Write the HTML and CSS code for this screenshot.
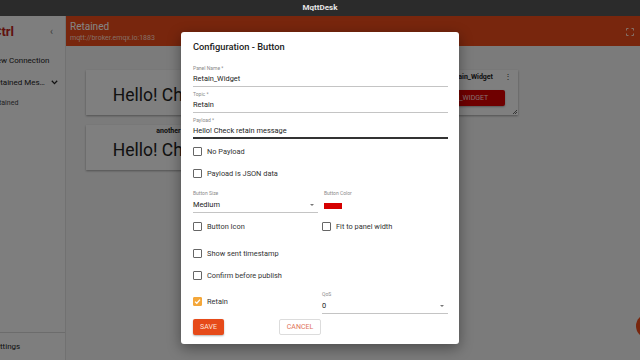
FILE: index.html
```html
<!DOCTYPE html>
<html lang="en">
<head>
  <meta charset="UTF-8">
  <title>MqttDesk</title>
  <meta name="viewport" content="width=device-width, initial-scale=1.0">
  <link rel="stylesheet" href="styles.css">
</head>

<body>
  <div class="titlebar">MqttDesk</div>

  <div class="app">
    <!-- Sidebar -->
    <aside class="sidebar">
      <div class="side-top">
        <div class="logo"><span>MqttCtrl</span></div>
        <span class="collapse">&lsaquo;</span>
      </div>
      <div class="side-list">
        <div class="side-item">New Connection</div>
        <div class="side-item side-group">
          <span class="ellipsis">Retained Messages</span>
          <svg width="7" height="5" viewBox="0 0 7 5"><path d="M0.8 0.8 L3.5 3.6 L6.2 0.8" fill="none" stroke="#222" stroke-width="1.3"/></svg>
        </div>
        <div class="side-item side-sub">Retained</div>
      </div>
      <div class="side-bottom">
        <div class="side-item">Settings</div>
      </div>
    </aside>

    <!-- Main -->
    <main class="main">
      <header class="header">
        <div>
          <div class="header-title">Retained</div>
          <div class="header-sub">mqtt://broker.emqx.io:1883</div>
        </div>
        <svg class="fullscreen" width="8" height="8" viewBox="0 0 8 8" fill="none" stroke="#ffd9c8" stroke-width="1">
          <path d="M0.5 2.5 V0.5 H2.5 M5.5 0.5 H7.5 V2.5 M7.5 5.5 V7.5 H5.5 M2.5 7.5 H0.5 V5.5"/>
        </svg>
      </header>

      <div class="panels">
        <div class="panel">
          <div class="panel-title"></div>
          <div class="panel-text">Hello! Check retain message</div>
        </div>
        <div class="panel panel-btn">
          <div class="panel-head">
            <span class="panel-title">Retain_Widget</span>
            <span class="menu">&#8942;</span>
          </div>
          <div class="widget-btn">RETAIN_WIDGET</div>
          <svg class="resize" width="5" height="5" viewBox="0 0 5 5"><path d="M1 5 L5 1 M3 5 L5 3" stroke="#444" stroke-width="0.8"/></svg>
        </div>
        <div class="panel">
          <div class="panel-title">another sample of a retained text message</div>
          <div class="panel-text">Hello! Check retain message</div>
        </div>
      </div>
    </main>

    <div class="fab"></div>

    <!-- Dialog -->
    <div class="overlay">
      <div class="dialog">
        <h2>Configuration - Button</h2>

        <div class="field">
          <label>Panel Name *</label>
          <div class="value">Retain_Widget</div>
        </div>
        <div class="field">
          <label>Topic *</label>
          <div class="value">Retain</div>
        </div>
        <div class="field focused">
          <label>Payload *</label>
          <div class="value">Hello! Check retain message</div>
        </div>

        <div class="check first"><span class="box"></span>No Payload</div>
        <div class="check"><span class="box"></span>Payload is JSON data</div>

        <div class="cols size-row">
          <div class="field select">
            <label>Button Size</label>
            <div class="value">Medium<span class="arrow"></span></div>
          </div>
          <div class="color-field">
            <label>Button Color</label>
            <div class="swatch"></div>
          </div>
        </div>

        <div class="cols icon-row">
          <div class="check"><span class="box"></span>Button Icon</div>
          <div class="check"><span class="box"></span>Fit to panel width</div>
        </div>

        <div class="check spaced"><span class="box"></span>Show sent timestamp</div>
        <div class="check"><span class="box"></span>Confirm before publish</div>

        <div class="cols qos-row">
          <div class="check">
            <span class="box checked">
              <svg width="7" height="7" viewBox="0 0 7 7"><path d="M1 3.6 L2.8 5.3 L6 1.6" fill="none" stroke="#fff" stroke-width="1.3"/></svg>
            </span>Retain
          </div>
          <div class="field select">
            <label>QoS</label>
            <div class="value">0<span class="arrow"></span></div>
          </div>
        </div>

        <div class="actions">
          <button class="btn-save">SAVE</button>
          <button class="btn-cancel">CANCEL</button>
        </div>
      </div>
    </div>
  </div>
</body>
</html>
```

FILE: styles.css
```css
* {
  margin: 0;
  padding: 0;
  box-sizing: border-box;
}
body {
  font-family: Roboto, "Noto Sans", sans-serif;
  width: 640px;
  height: 360px;
  overflow: hidden;
  background-color: #2b2b2b;
}
.titlebar {
  height: 16px;
  line-height: 16px;
  background-color: #2b2b2b;
  color: #e6e6e6;
  font-size: 8px;
  font-weight: bold;
  text-align: center;
}
.app {
  position: relative;
  display: flex;
  height: 344px;
  background-color: #ececec;
  overflow: hidden;
}

/* sidebar */
.sidebar {
  width: 66px;
  background-color: #f2f2f2;
  border-right: 1px solid #d8d8d8;
  display: flex;
  flex-direction: column;
  overflow: hidden;
}
.side-top {
  height: 30px;
  display: flex;
  align-items: center;
  justify-content: space-between;
  padding-right: 12px;
}
.logo {
  width: 14px;
  display: flex;
  justify-content: flex-end;
  overflow: hidden;
  color: #b8241a;
  font-size: 13px;
  font-weight: bold;
}
.collapse {
  color: #777;
  font-size: 10px;
}
.side-list {
  margin-left: -9px;
  padding-top: 3px;
  flex: 1;
}
.side-item {
  height: 22px;
  display: flex;
  align-items: center;
  font-size: 8px;
  color: #222;
  white-space: nowrap;
}
.side-group {
  gap: 3px;
}
.ellipsis {
  width: 57px;
  overflow: hidden;
  text-overflow: ellipsis;
}
.side-sub {
  height: 20px;
  font-size: 7px;
  color: #444;
}
.side-bottom {
  margin-left: -9px;
  border-top: 1px solid #d0d0d0;
  height: 28px;
  padding-top: 2px;
}

/* main */
.main {
  flex: 1;
  display: flex;
  flex-direction: column;
}
.header {
  height: 30px;
  background-color: #e64a19;
  color: #fff;
  display: flex;
  align-items: center;
  justify-content: space-between;
  padding: 2px 6px 0 4px;
}
.header-title {
  font-size: 10px;
  line-height: 12px;
}
.header-sub {
  font-size: 7px;
  line-height: 10px;
  color: #ffd5c4;
}
.panels {
  display: grid;
  grid-template-columns: 275px 157px;
  grid-auto-rows: 45px;
  row-gap: 10px;
  padding: 24px 20px;
}
.panel {
  position: relative;
  background-color: #f3f3f3;
  box-shadow: 0 1px 2px rgba(0, 0, 0, 0.35);
  text-align: center;
}
.panel-title {
  display: block;
  height: 12px;
  line-height: 12px;
  font-size: 7px;
  font-weight: bold;
  color: #222;
  white-space: nowrap;
}
.panel-text {
  font-size: 17.5px;
  line-height: 26px;
  color: #222;
  white-space: nowrap;
}
.panel-btn {
  display: flex;
  flex-direction: column;
  align-items: flex-end;
}
.panel-head {
  width: 100%;
  display: flex;
  justify-content: flex-end;
  position: relative;
  padding: 1px 25px 0 0;
}
.menu {
  position: absolute;
  right: 6px;
  top: 1px;
  font-size: 8px;
  line-height: 12px;
  color: #333;
}
.widget-btn {
  margin: 7px 13px 0 0;
  width: 86px;
  height: 16px;
  line-height: 16px;
  background-color: #d50000;
  color: #ffd8d8;
  font-size: 7px;
  border-radius: 2px;
  box-shadow: 0 1px 2px rgba(0, 0, 0, 0.3);
}
.resize {
  position: absolute;
  right: 1px;
  bottom: 1px;
}
.fab {
  position: absolute;
  right: -20px;
  bottom: 22px;
  width: 24px;
  height: 24px;
  border-radius: 50%;
  background-color: #e64a19;
}

/* dialog */
.overlay {
  position: absolute;
  inset: 0;
  background-color: rgba(0, 0, 0, 0.48);
  display: flex;
  justify-content: center;
  align-items: center;
}
.dialog {
  width: 278px;
  height: 312px;
  background-color: #fff;
  border-radius: 3px;
  box-shadow: 0 4px 14px rgba(0, 0, 0, 0.4);
  padding: 8px 11px 10px 12px;
}
h2 {
  font-size: 9.3px;
  font-weight: 500;
  line-height: 14px;
  color: #222;
  margin-bottom: 10px;
}
.field {
  margin-top: 3px;
  border-bottom: 1px solid #c4c4c4;
  padding-bottom: 1px;
}
.field.focused {
  border-bottom: 2px solid #333;
  padding-bottom: 0;
}
label {
  display: block;
  font-size: 5px;
  line-height: 8px;
  color: #8a8a8a;
}
.value {
  position: relative;
  margin-top: 1px;
  font-size: 7.4px;
  line-height: 12px;
  color: #222;
}
.select .value {
  margin-top: 2px;
}
.arrow {
  position: absolute;
  right: 4px;
  top: 5px;
  border-left: 2.5px solid transparent;
  border-right: 2.5px solid transparent;
  border-top: 2.5px solid #777;
}
.check {
  height: 22px;
  display: flex;
  align-items: center;
  gap: 5px;
  font-size: 7.4px;
  color: #333;
}
.check.first {
  margin-top: 1px;
}
.check.spaced {
  margin-top: 5px;
}
.box {
  width: 9px;
  height: 9px;
  border: 1.3px solid #666;
  border-radius: 1px;
  display: flex;
  align-items: center;
  justify-content: center;
}
.box.checked {
  background-color: #f4a73a;
  border-color: #f4a73a;
}
.cols {
  display: grid;
  grid-template-columns: 125px 1fr;
  column-gap: 4px;
}
.cols .field {
  margin-top: 0;
}
.size-row {
  margin-top: 5px;
}
.icon-row {
  margin-top: 2px;
}
.color-field {
  padding-left: 2px;
}
.swatch {
  margin-top: 6px;
  width: 18px;
  height: 6px;
  background-color: #d50000;
}
.qos-row {
  margin-top: 4px;
  align-items: start;
}
.actions {
  margin-top: 5px;
  display: flex;
}
button {
  font-family: Roboto, sans-serif;
  font-size: 7px;
  height: 16px;
  border-radius: 2px;
  cursor: pointer;
}
.btn-save {
  width: 31px;
  background-color: #e64a19;
  color: #ffe2d8;
  border: none;
  box-shadow: 0 1px 2px rgba(0, 0, 0, 0.3);
}
.btn-cancel {
  margin-left: 55px;
  width: 42px;
  background-color: #fff;
  color: #e0745a;
  border: 1px solid #dcdcdc;
}
```
